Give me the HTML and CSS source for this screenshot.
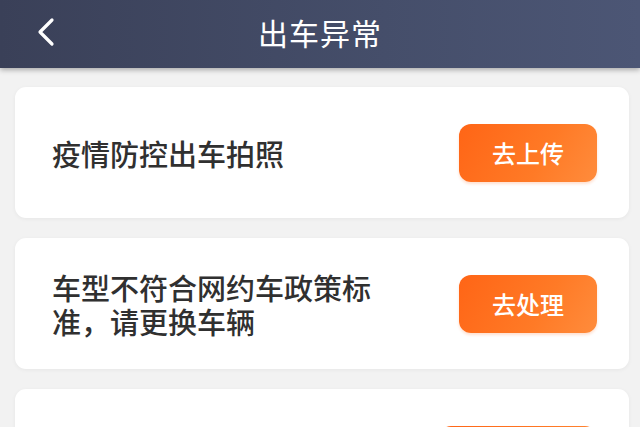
FILE: index.html
```html
<!DOCTYPE html>
<html lang="zh-CN">
<head>
  <meta charset="UTF-8">
  <meta name="viewport" content="width=device-width, initial-scale=1.0">
  <title>出车异常</title>
  <link rel="stylesheet" href="styles.css">
</head>
<body>
  <!-- Top bar -->
  <header class="topbar">
    <a class="back" href="#">
      <svg width="20" height="30" viewBox="0 0 20 30">
        <path d="M16 3 L4 15 L16 27" fill="none" stroke="#fff" stroke-width="3.2" stroke-linecap="round" stroke-linejoin="round"/>
      </svg>
    </a>
    <h1>出车异常</h1>
    <span></span>
  </header>

  <!-- Exception list -->
  <main class="list">
    <div class="card">
      <p class="card-text">疫情防控出车拍照</p>
      <button class="btn">去上传</button>
    </div>
    <div class="card">
      <p class="card-text">车型不符合网约车政策标准，请更换车辆</p>
      <button class="btn">去处理</button>
    </div>
    <!-- third item is below the fold, only its top edge shows -->
    <div class="card">
      <p class="card-text"></p>
      <button class="btn btn-wide" aria-label="去处理"></button>
    </div>
  </main>
</body>
</html>
```

FILE: styles.css
```css
body {
  margin: 0;
  background: #f2f2f2;
  font-family: "Noto Sans CJK SC", "Noto Sans", sans-serif;
  color: #333;
  overflow: hidden;
}
.topbar {
  height: 68px;
  display: grid;
  grid-template-columns: 80px 1fr 80px;
  align-items: center;
  background: linear-gradient(90deg, #3a4058 0%, #454e6a 60%, #4c5675 100%);
  box-shadow: 0 2px 5px rgba(0, 0, 0, 0.3);
}
.back {
  display: flex;
  padding-left: 36px;
  padding-bottom: 4px;
}
.topbar h1 {
  margin: 0;
  text-align: center;
  color: #fff;
  font-size: 30px;
  font-weight: 400;
  letter-spacing: 1px;
  padding-bottom: 4px;
}
.list {
  display: flex;
  flex-direction: column;
  gap: 20px;
  padding: 19px 11px 0 15px;
}
.card {
  height: 131px;
  background: #fff;
  border-radius: 11px;
  box-shadow: 0 1px 4px rgba(0, 0, 0, 0.05);
  display: flex;
  align-items: center;
  justify-content: space-between;
  padding: 0 32px 0 37px;
  flex-shrink: 0;
}
.card-text {
  margin: 0;
  max-width: 330px;
  font-size: 29px;
  font-weight: 500;
  line-height: 34px;
  color: #303030;
}
.btn {
  width: 138px;
  height: 58px;
  border: none;
  border-radius: 12px;
  background: linear-gradient(120deg, #ff6516 0%, #ff7a26 60%, #ff8c3c 100%);
  color: #fff;
  font-family: inherit;
  font-size: 24px;
  font-weight: 500;
  box-shadow: 0 2px 3px rgba(255, 100, 20, 0.2);
  cursor: pointer;
}
.btn-wide {
  width: 158px;
}
```
